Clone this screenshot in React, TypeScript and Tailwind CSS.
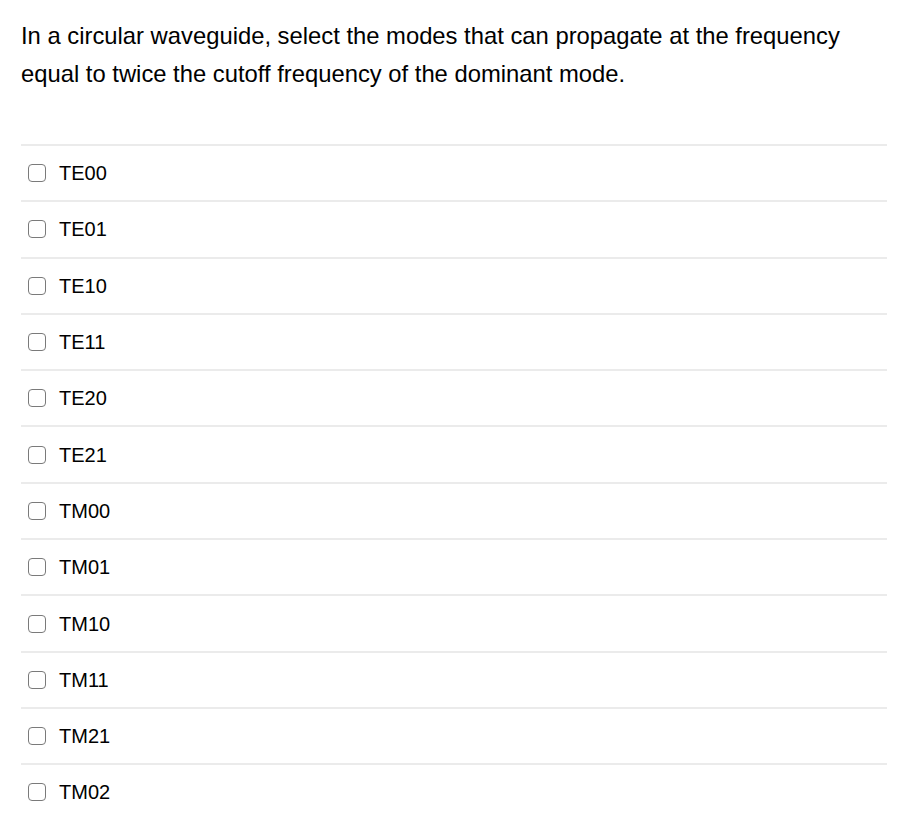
import React from "react";

const options = [
  "TE00",
  "TE01",
  "TE10",
  "TE11",
  "TE20",
  "TE21",
  "TM00",
  "TM01",
  "TM10",
  "TM11",
  "TM21",
  "TM02",
];

export default function App() {
  return (
    <div
      className="min-h-screen bg-white text-black px-[21px] pt-[17px]"
      style={{ fontFamily: '"Liberation Sans", Arial, sans-serif' }}
    >
      <p className="text-[23.8px] leading-[38px]">
        In a circular waveguide, select the modes that can propagate at the frequency equal to
        twice the cutoff frequency of the dominant mode.
      </p>
      <div className="mt-[51px]">
        {options.map((o) => (
          <label
            key={o}
            className="flex items-center h-[56.3px] border-t-2 border-[#ebebeb] pl-[7px] cursor-pointer"
          >
            <span className="w-[18px] h-[18px] rounded-[4px] border border-[#7a7a7a] bg-white shrink-0" />
            <span className="ml-[13px] text-[20px] leading-none">{o}</span>
          </label>
        ))}
      </div>
    </div>
  );
}
